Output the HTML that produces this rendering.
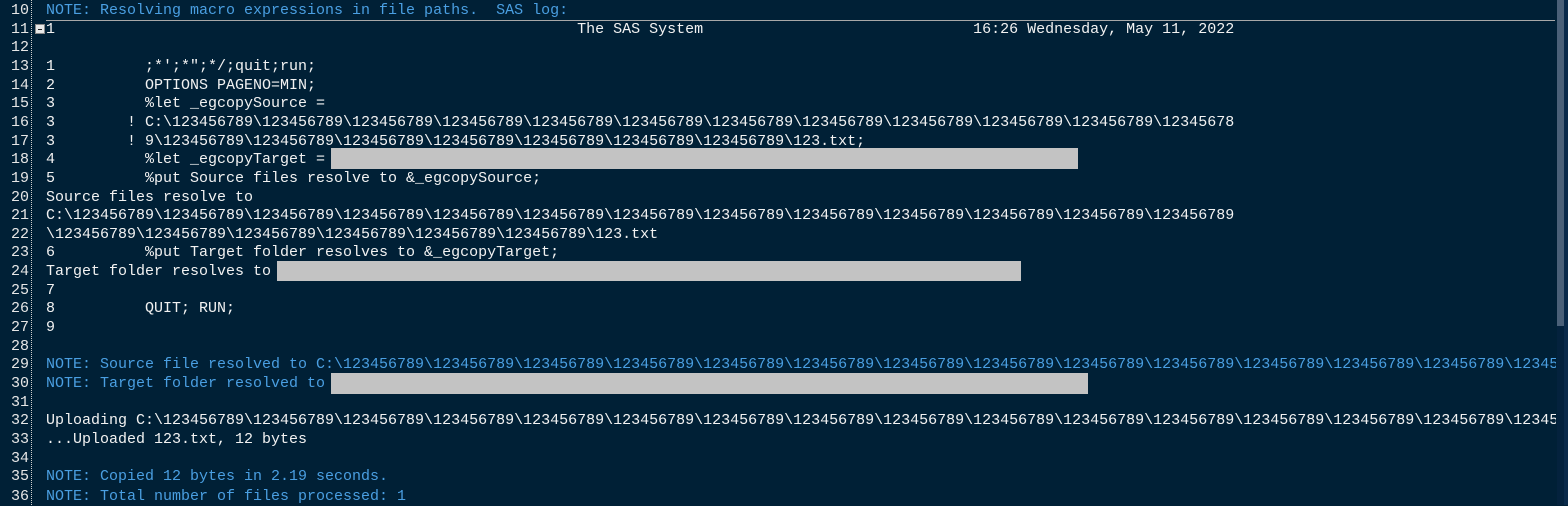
<!DOCTYPE html>
<html><head><meta charset="utf-8"><style>
body{margin:0;width:1568px;height:505px;background:#002036;overflow:hidden;position:relative;font-family:"Liberation Mono","Courier New",monospace;font-size:15px;}
.r{position:absolute;left:0;height:19px;line-height:19px;white-space:pre;width:1556px;overflow:hidden}
.n{position:absolute;left:0;width:29px;text-align:right;color:#e6e6e6}
.t{position:absolute;left:46px;color:#f2f2f2}
.b{color:#4a9fe2}
.g{position:absolute;background:#c3c3c3}
#gut{position:absolute;left:31px;top:0;height:505px;border-left:1px dotted #d0d0d0}
#sep{position:absolute;left:46px;top:20px;width:1509px;height:1px;background:#a8a8a8}
#sb{position:absolute;left:1557px;top:0;width:7px;height:505px;background:#04223d}
#th{position:absolute;left:1557px;top:0;width:7px;height:326px;background:#4a6078}
#edge{position:absolute;left:1564px;top:0;width:4px;height:505px;background:#0a2a4a}
#box{position:absolute;left:35px;top:24px;width:8px;height:8px;background:#e8e8e8;border:1px solid #888}
#box:after{content:"";position:absolute;left:2px;top:3.5px;width:4px;height:1.5px;background:#222}
</style></head><body>
<div id="gut"></div>
<div class="r" style="top:1px"><span class="n">10</span><span class="t b">NOTE: Resolving macro expressions in file paths.  SAS log:</span></div>
<div class="r" style="top:19.6px"><span class="n">11</span><span class="t">1                                                          The SAS System                              16:26 Wednesday, May 11, 2022</span></div>
<div class="r" style="top:38.3px"><span class="n">12</span></div>
<div class="r" style="top:56.9px"><span class="n">13</span><span class="t">1          ;*';*";*/;quit;run;</span></div>
<div class="r" style="top:75.6px"><span class="n">14</span><span class="t">2          OPTIONS PAGENO=MIN;</span></div>
<div class="r" style="top:94.2px"><span class="n">15</span><span class="t">3          %let _egcopySource =</span></div>
<div class="r" style="top:112.9px"><span class="n">16</span><span class="t">3        ! C:\123456789\123456789\123456789\123456789\123456789\123456789\123456789\123456789\123456789\123456789\123456789\12345678</span></div>
<div class="r" style="top:131.5px"><span class="n">17</span><span class="t">3        ! 9\123456789\123456789\123456789\123456789\123456789\123456789\123456789\123.txt;</span></div>
<div class="r" style="top:150.2px"><span class="n">18</span><span class="t">4          %let _egcopyTarget =</span></div>
<div class="r" style="top:168.8px"><span class="n">19</span><span class="t">5          %put Source files resolve to &amp;_egcopySource;</span></div>
<div class="r" style="top:187.5px"><span class="n">20</span><span class="t">Source files resolve to</span></div>
<div class="r" style="top:206.1px"><span class="n">21</span><span class="t">C:\123456789\123456789\123456789\123456789\123456789\123456789\123456789\123456789\123456789\123456789\123456789\123456789\123456789</span></div>
<div class="r" style="top:224.8px"><span class="n">22</span><span class="t">\123456789\123456789\123456789\123456789\123456789\123456789\123.txt</span></div>
<div class="r" style="top:243.4px"><span class="n">23</span><span class="t">6          %put Target folder resolves to &amp;_egcopyTarget;</span></div>
<div class="r" style="top:262.1px"><span class="n">24</span><span class="t">Target folder resolves to</span></div>
<div class="r" style="top:280.7px"><span class="n">25</span><span class="t">7</span></div>
<div class="r" style="top:299.4px"><span class="n">26</span><span class="t">8          QUIT; RUN;</span></div>
<div class="r" style="top:318px"><span class="n">27</span><span class="t">9</span></div>
<div class="r" style="top:336.7px"><span class="n">28</span></div>
<div class="r" style="top:355.3px"><span class="n">29</span><span class="t b">NOTE: Source file resolved to C:\123456789\123456789\123456789\123456789\123456789\123456789\123456789\123456789\123456789\123456789\123456789\123456789\123456789\123456789\123456789\123456789</span></div>
<div class="r" style="top:374px"><span class="n">30</span><span class="t b">NOTE: Target folder resolved to</span></div>
<div class="r" style="top:392.6px"><span class="n">31</span></div>
<div class="r" style="top:411.3px"><span class="n">32</span><span class="t">Uploading C:\123456789\123456789\123456789\123456789\123456789\123456789\123456789\123456789\123456789\123456789\123456789\123456789\123456789\123456789\123456789\123456789\123456789</span></div>
<div class="r" style="top:429.9px"><span class="n">33</span><span class="t">...Uploaded 123.txt, 12 bytes</span></div>
<div class="r" style="top:448.6px"><span class="n">34</span></div>
<div class="r" style="top:467.2px"><span class="n">35</span><span class="t b">NOTE: Copied 12 bytes in 2.19 seconds.</span></div>
<div class="r" style="top:486.5px"><span class="n">36</span><span class="t b">NOTE: Total number of files processed: 1</span></div>
<div class="g" style="left:331px;top:148px;width:747px;height:21px"></div>
<div class="g" style="left:277px;top:261px;width:744px;height:20px"></div>
<div class="g" style="left:331px;top:373px;width:757px;height:21px"></div>
<div id="sep"></div>
<div id="box"></div>
<div id="sb"></div><div id="th"></div><div id="edge"></div>
</body></html>
